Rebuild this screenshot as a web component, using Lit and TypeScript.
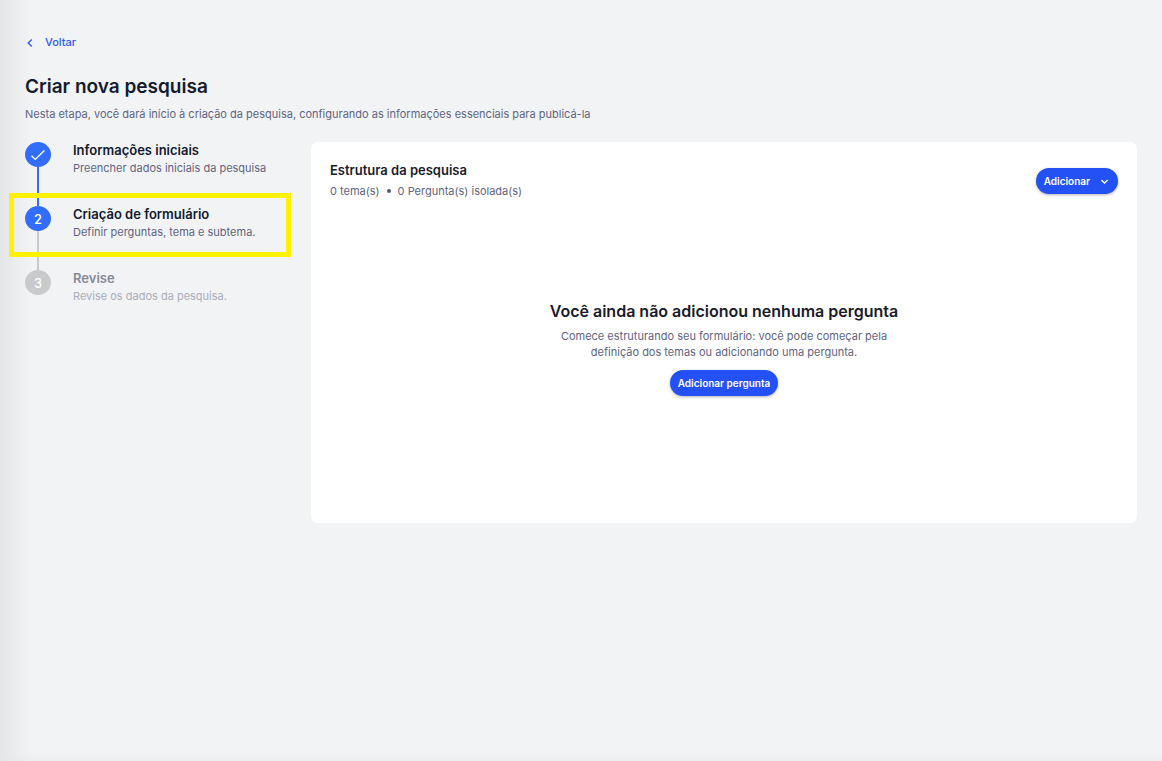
import { LitElement, html, css, nothing } from "lit";
import { customElement, property } from "lit/decorators.js";
import { classMap } from "lit/directives/class-map.js";

type StepState = "done" | "current" | "pending";

interface Step {
  title: string;
  description: string;
  state: StepState;
}

@customElement("survey-stepper")
export class SurveyStepper extends LitElement {
  @property({ attribute: false }) steps: Step[] = [];

  static styles = css`
    :host {
      display: block;
    }
    .steps {
      list-style: none;
      margin: 0;
      padding: 0;
    }
    .step {
      position: relative;
      display: grid;
      grid-template-columns: 26px 1fr;
      column-gap: 22px;
      min-height: 64px;
    }
    .rail {
      display: flex;
      flex-direction: column;
      align-items: center;
    }
    .marker {
      display: flex;
      align-items: center;
      justify-content: center;
      flex: none;
      width: 26px;
      height: 25px;
      border-radius: 50%;
      background: #336dff;
      color: #fff;
      font-size: 13px;
      font-weight: 500;
      line-height: 16px;
    }
    .line {
      flex: 1;
      width: 2px;
      background: #c9cacc;
    }
    .done .line {
      background: #336dff;
    }
    .title {
      margin: 0;
      font-size: 13px;
      font-weight: 600;
      line-height: 16px;
      color: #141b2f;
    }
    .description {
      margin: 2px 0 0;
      font-size: 11px;
      line-height: 16px;
      color: #62657f;
    }
    .pending .marker {
      background: #c9cacc;
    }
    .pending .title {
      color: #868a95;
    }
    .pending .description {
      color: #abadba;
    }
    .highlight {
      position: absolute;
      inset: -13px 0 13px -16px;
      border: 5px solid #fff200;
      pointer-events: none;
    }
  `;

  private marker(step: Step, index: number) {
    return step.state === "done"
      ? html`<svg width="16" height="16" viewBox="0 0 16 16" fill="none" aria-hidden="true">
          <path d="M1.5 8.8 L5.3 12.4 L14.4 3.6" stroke="#fff" stroke-width="1.4" />
        </svg>`
      : index + 1;
  }

  render() {
    return html`<ol class="steps">
      ${this.steps.map(
        (step, i) => html`<li
          class=${classMap({ step: true, [step.state]: true })}
          aria-current=${step.state === "current" ? "step" : nothing}
        >
          <div class="rail">
            <span class="marker">${this.marker(step, i)}</span>
            ${i < this.steps.length - 1 ? html`<span class="line"></span>` : nothing}
          </div>
          <div>
            <h2 class="title">${step.title}</h2>
            <p class="description">${step.description}</p>
          </div>
          ${step.state === "current" ? html`<span class="highlight"></span>` : nothing}
        </li>`
      )}
    </ol>`;
  }
}

@customElement("survey-structure")
export class SurveyStructure extends LitElement {
  static styles = css`
    :host {
      display: block;
      padding: 20px 19px;
      border-radius: 7px;
      background: #fff;
    }
    .header {
      display: flex;
      align-items: center;
      justify-content: space-between;
    }
    .title {
      margin: 0;
      font-size: 13px;
      font-weight: 600;
      line-height: 16px;
      color: #1a1c2b;
    }
    .meta {
      display: flex;
      align-items: center;
      gap: 7px;
      margin: 5px 0 0;
      font-size: 11px;
      line-height: 16px;
      color: #62657f;
    }
    .dot {
      width: 4px;
      height: 4px;
      border-radius: 50%;
      background: #55586f;
    }
    .button {
      display: inline-flex;
      align-items: center;
      gap: 10px;
      height: 26px;
      padding: 0 8px;
      border: 0;
      border-radius: 13px;
      background: #2451f5;
      box-shadow: 0 1px 3px rgba(0, 0, 0, 0.3);
      color: #fff;
      font-family: inherit;
      font-size: 10px;
      font-weight: 600;
      line-height: 16px;
      cursor: pointer;
    }
    .empty {
      display: flex;
      flex-direction: column;
      align-items: center;
      padding: 100px 0 107px;
      text-align: center;
    }
    .empty-title {
      margin: 0;
      font-size: 16px;
      font-weight: 600;
      line-height: 24px;
      color: #1a1c2b;
    }
    .empty-text {
      max-width: 344px;
      margin: 5px 0 10px;
      font-size: 11px;
      line-height: 16px;
      color: #62657f;
    }
  `;

  render() {
    return html`
      <header class="header">
        <div>
          <h2 class="title">Estrutura da pesquisa</h2>
          <p class="meta">
            <span>0 tema(s)</span><span class="dot"></span><span>0 Pergunta(s) isolada(s)</span>
          </p>
        </div>
        <button class="button" type="button" aria-haspopup="menu">
          Adicionar
          <svg width="10" height="10" viewBox="0 0 10 10" fill="none" aria-hidden="true">
            <path d="M1.4 4 L4.5 7 L7.6 4" stroke="#fff" stroke-width="1.3" />
          </svg>
        </button>
      </header>
      <div class="empty">
        <h3 class="empty-title">Você ainda não adicionou nenhuma pergunta</h3>
        <p class="empty-text">
          Comece estruturando seu formulário: você pode começar pela definição dos temas ou
          adicionando uma pergunta.
        </p>
        <button class="button" type="button">Adicionar pergunta</button>
      </div>
    `;
  }
}

@customElement("app-root")
export class AppRoot extends LitElement {
  static styles = css`
    :host {
      display: block;
      box-sizing: border-box;
      min-height: 100vh;
      padding: 34px 25px;
      background:
        linear-gradient(to right, #e5e6e8, rgba(241, 243, 245, 0) 32px),
        linear-gradient(to top, #ecedef, rgba(241, 243, 245, 0) 8px),
        #f1f3f5;
      font-family: Inter, "Liberation Sans", sans-serif;
    }
    .nav {
      display: flex;
    }
    .back {
      display: inline-flex;
      align-items: center;
      gap: 10px;
      font-size: 11px;
      font-weight: 500;
      line-height: 16px;
      color: #2f5bf3;
      text-decoration: none;
    }
    .heading {
      margin: 24px 0 0;
      font-size: 19px;
      font-weight: 600;
      line-height: 26px;
      color: #141b2f;
    }
    .intro {
      margin: 6px 0 20px;
      font-size: 11px;
      line-height: 16px;
      color: #62657f;
    }
    .columns {
      display: grid;
      grid-template-columns: 266px 1fr;
      column-gap: 20px;
      align-items: start;
    }
  `;

  private steps: Step[] = [
    {
      title: "Informações iniciais",
      description: "Preencher dados iniciais da pesquisa",
      state: "done",
    },
    {
      title: "Criação de formulário",
      description: "Definir perguntas, tema e subtema.",
      state: "current",
    },
    { title: "Revise", description: "Revise os dados da pesquisa.", state: "pending" },
  ];

  render() {
    return html`
      <main>
        <nav class="nav">
          <a class="back" href="#">
            <svg width="10" height="10" viewBox="0 0 10 10" fill="none" aria-hidden="true">
              <path d="M6.8 2.4 L3.2 5.9 L6.8 9.4" stroke="currentColor" stroke-width="1.4" />
            </svg>
            Voltar
          </a>
        </nav>
        <h1 class="heading">Criar nova pesquisa</h1>
        <p class="intro">
          Nesta etapa, você dará início à criação da pesquisa, configurando as informações
          essenciais para publicá-la
        </p>
        <div class="columns">
          <survey-stepper .steps=${this.steps}></survey-stepper>
          <survey-structure></survey-structure>
        </div>
      </main>
    `;
  }
}
